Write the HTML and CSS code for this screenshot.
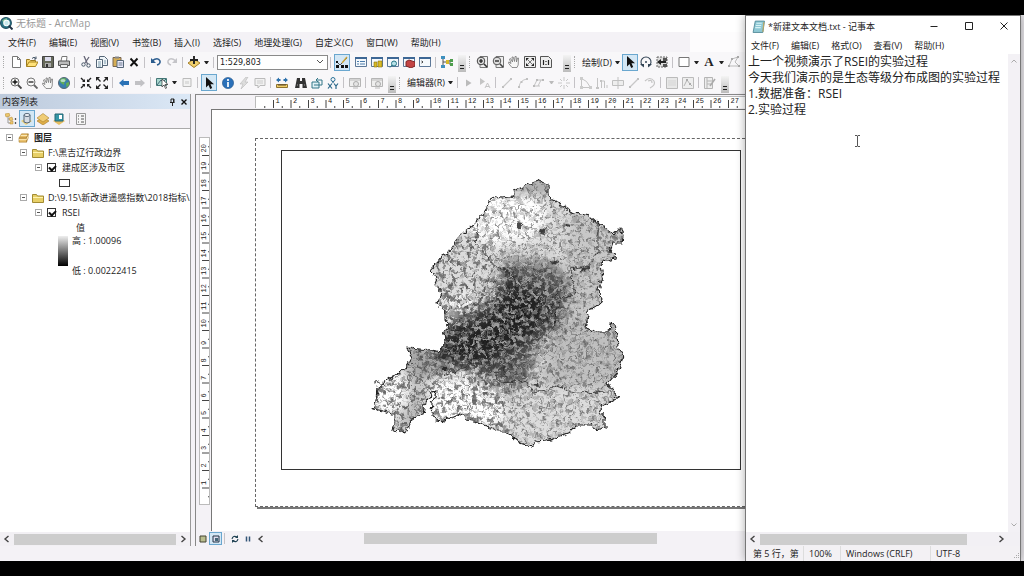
FILE: index.html
```html
<!DOCTYPE html>
<html lang="zh-CN">
<head>
  <meta charset="UTF-8">
  <title>无标题 - ArcMap</title>
  <link rel="stylesheet" href="styles.css">
</head>
<body>

<!-- icon set -->
<svg class="defs" aria-hidden="true">
  <symbol id="new" viewBox="0 0 12 12"><path d="M2.500 .5h5l3 3v8h-8zM7.500 .5v3h3" fill="#fff" stroke="#777"/></symbol>
  <symbol id="open" viewBox="0 0 12 12"><path d="M.5 10.500v-7h3l1 1h5v2" fill="#f6d46a" stroke="#9a7a20"/><path d="M.5 10.500l2.500-4.500h9l-2.500 4.500z" fill="#ffe27a" stroke="#a98420"/><path d="M6 2.500q2-2.500 4 0M10 .5v2.500h-2" fill="none" stroke="#456"/></symbol>
  <symbol id="save" viewBox="0 0 12 12"><path d="M.5 .5h11v11h-11z" fill="#66695a" stroke="#444"/><path d="M3 1h6v4H3z" fill="#dde"/><path d="M3 7h6v4H3z" fill="#aaa"/><path d="M4 8h2v3H4z" fill="#333"/></symbol>
  <symbol id="print" viewBox="0 0 12 12"><path d="M3 5l1-4.500h5L8.500 5" fill="#fff" stroke="#777"/><path d="M.5 5h11v4.500H.5z" fill="#bbb" stroke="#555"/><path d="M2.500 8.500h7v3h-7z" fill="#eee" stroke="#666"/></symbol>
  <symbol id="cut" viewBox="0 0 12 12"><path d="M4 0l3.500 8M9 1L5 7" stroke="#667" stroke-width="1.300"/><circle cx="3.500" cy="8.500" r="1.700" fill="none" stroke="#456"/><circle cx="8.500" cy="9.500" r="1.700" fill="none" stroke="#456"/></symbol>
  <symbol id="copy" viewBox="0 0 12 12"><path d="M3.500 .5h5l3 3v6h-8z" fill="#eef4f8" stroke="#567"/><path d="M.5 3.500h6v8h-6z" fill="#f5fafc" stroke="#567"/><path d="M2 6h3M2 8h3M2 10h3M8 5h2M8 7h2" stroke="#7898aa"/></symbol>
  <symbol id="paste" viewBox="0 0 12 12"><path d="M1 1.500h8v9H1z" fill="#d5ad55" stroke="#765"/><path d="M3 .5h4v2H3z" fill="#888"/><path d="M5 4.500h6.500v7H5z" fill="#eef" stroke="#567"/><path d="M6.500 7h4M6.500 9h4" stroke="#678"/></symbol>
  <symbol id="delete" viewBox="0 0 12 12"><path d="M2.500 2.500l7 7.500M9.500 2.500l-7 7.500" stroke="#111" stroke-width="1.900"/></symbol>
  <symbol id="undo" viewBox="0 0 12 12"><path d="M2 5q6-4.500 8 0q.5 3-3 4" fill="none" stroke="#2b5c8e" stroke-width="1.600"/><path d="M1 2v5h5z" fill="#2b5c8e"/></symbol>
  <symbol id="redo" viewBox="0 0 12 12"><path d="M10 5q-6-4.500-8 0q-.5 3 3 4" fill="none" stroke="#c4c4c8" stroke-width="1.500"/><path d="M11 2v5H6z" fill="#c4c4c8"/></symbol>
  <symbol id="adddata" viewBox="0 0 12 12"><path d="M0 7l6-4 6 4-6 4.500z" fill="#f0cf6c" stroke="#a47e28"/><path d="M6 0v8M2 4h8" stroke="#222" stroke-width="1.900"/></symbol>
  <symbol id="sketch" viewBox="0 0 12 12"><path d="M1 6l3 3 7-7" fill="none" stroke="#555"/><path d="M0 9h3v3H0zM5 9h3v3H5zM9 9h3v3H9zM0 5h2v2H0z" fill="#111"/><path d="M6 7l5-6" stroke="#c7a43c" stroke-width="1.400"/></symbol>
  <symbol id="win" viewBox="0 0 12 12"><path d="M.5 1.500h11v9H.5z" fill="#f5f9fc" stroke="#5d7898"/><path d="M0 1h12v2H0z" fill="#3d6795"/></symbol>
  <symbol id="table" viewBox="0 0 12 12"><use href="#win"/><path d="M2 5.500h2M5 5.500h5M2 8h2M5 8h5" stroke="#4d7dac"/></symbol>
  <symbol id="catalog" viewBox="0 0 12 12"><use href="#win"/><path d="M3 6h3v5H3zM7 5h4v6H7z" fill="#d9ba24" stroke="#887413" stroke-width=".6"/></symbol>
  <symbol id="search" viewBox="0 0 12 12"><use href="#win"/><circle cx="7" cy="7.500" r="2.500" fill="#b8e1e8" stroke="#287787"/><path d="M5 9l-2 2.500" stroke="#287787"/></symbol>
  <symbol id="toolbox" viewBox="0 0 12 12"><use href="#win"/><path d="M3 5.500l3-1.500 6 2v4l-4 2-5-2z" fill="#c34444" stroke="#802929"/></symbol>
  <symbol id="python" viewBox="0 0 12 12"><use href="#win"/><path d="M2.500 5l1.500 1-1.500 1" fill="none" stroke="#333"/></symbol>
  <symbol id="model" viewBox="0 0 12 12"><path d="M2 2v8M2 6h8M6 6l4-2M6 6l4 3" stroke="#555" fill="none"/><path d="M0 0h4v3H0zM0 9h4v3H0z" fill="#3e90bf"/><path d="M5 4h3v4H5z" fill="#d3b82a"/><path d="M9 3h3v3H9zM9 7h3v3H9z" fill="#4d9d4d"/></symbol>
  <symbol id="pagezin" viewBox="0 0 12 12"><path d="M4 .5h7.500v11H4z" fill="#eee" stroke="#777"/><circle cx="5" cy="5" r="3.800" fill="#ddd" stroke="#444"/><path d="M8 8l3 3" stroke="#333" stroke-width="1.600"/><path d="M5 3v4M3 5h4" stroke="#111" stroke-width="1.200"/></symbol>
  <symbol id="pagezout" viewBox="0 0 12 12"><path d="M4 .5h7.500v11H4z" fill="#eee" stroke="#777"/><circle cx="5" cy="5" r="3.800" fill="#ddd" stroke="#555"/><path d="M8 8l3 3" stroke="#444" stroke-width="1.600"/><path d="M3 5h4" stroke="#111" stroke-width="1.200"/></symbol>
  <symbol id="pan" viewBox="0 0 12 12"><path d="M4 11.500L.7 7.500V6l2.300 1.500L1.500 3l1-.5L4.500 6 4 1h1.200L6.500 5.500 7 .5h1.200L8.500 6l1-4h1l-.3 7-1.200 2.500z" fill="#f6f6f6" stroke="#777" stroke-width=".8"/></symbol>
  <symbol id="pagefull" viewBox="0 0 12 12"><path d="M.5 .5h11v11H.5z" fill="#eee" stroke="#555"/><path d="M2 5V2h3zM7 2h3v3zM2 7v3h3zM10 7v3H7z" fill="#222"/><path d="M3 3l6 6M9 3L3 9" stroke="#777"/></symbol>
  <symbol id="one" viewBox="0 0 12 12"><path d="M.5 .5h8l3 3v8H.5z" fill="#eee" stroke="#555"/><path d="M3.500 4v5M8.500 4v5M6 5v1M6 8v1" stroke="#222" stroke-width="1.200"/></symbol>
  <symbol id="pointer" viewBox="0 0 12 12"><path d="M3 0v10.500l2.500-2.500 1.700 4 2-.9-1.700-3.800H11z" fill="#111"/></symbol>
  <symbol id="rotate" viewBox="0 0 12 12"><path d="M3 10A5 5 0 1 1 9 10" fill="none" stroke="#345" stroke-width="1.100"/><path d="M0 8h4v3.500zM12 8H8v3.500z" fill="#345"/><circle cx="6" cy="6" r="1" fill="#345"/></symbol>
  <symbol id="zoomsel" viewBox="0 0 12 12"><path d="M1 1h10v10H1z" fill="#ddd" stroke="#666" stroke-dasharray="2 1"/><path d="M1 6l4-3v2h5v2H5v2z" fill="#222"/><path d="M7 2h4v3H7zM7 8h4v3H7z" fill="#555"/></symbol>
  <symbol id="rect" viewBox="0 0 12 12"><path d="M1 1.500h10v9H1z" fill="#fff" stroke="#777"/></symbol>
  <symbol id="nodes" viewBox="0 0 12 12"><path d="M1 10l3-7 6-2-3 5 4 4z" fill="none" stroke="#bbb"/><path d="M0 9h2v2H0zM3 2h2v2H3zM9 0h2v2H9zM10 9h2v2h-2z" fill="#aaa"/></symbol>
  <symbol id="zin" viewBox="0 0 12 12"><circle cx="5" cy="5" r="4" fill="#f8f8f8" stroke="#666"/><path d="M8 8l3.500 3.500" stroke="#444" stroke-width="1.900"/><path d="M5 2.500v5M2.500 5h5" stroke="#111" stroke-width="1.400"/></symbol>
  <symbol id="zout" viewBox="0 0 12 12"><circle cx="5" cy="5" r="4" fill="#f8f8f8" stroke="#777"/><path d="M8 8l3.500 3.500" stroke="#666" stroke-width="1.900"/><path d="M2.500 5h5" stroke="#222" stroke-width="1.300"/></symbol>
  <symbol id="globe" viewBox="0 0 12 12"><circle cx="6" cy="6" r="5.500" fill="#397fae" stroke="#567"/><path d="M3 1.500l4-.5 1.500 2-2 2-.5 3-3-2-1.500-2zM8 6l3-1v3l-2.500 2.500z" fill="#62ad57"/><ellipse cx="5" cy="3.500" rx="2.500" ry="1.500" fill="#d9eef2" opacity=".7"/></symbol>
  <symbol id="shrink" viewBox="0 0 12 12"><path d="M1 1l3 3M11 1L8 4M1 11l3-3M11 11L8 8" stroke="#222" stroke-width="1.400"/><path d="M5 2v3H2zM7 2v3h3zM5 10V7H2zM7 10V7h3z" fill="#222"/></symbol>
  <symbol id="grow" viewBox="0 0 12 12"><path d="M1.500 1.500l3 3M10.500 1.500l-3 3M1.500 10.500l3-3M10.500 10.500l-3-3" stroke="#222" stroke-width="1.300"/><path d="M0 0h4L0 4zM12 0H8l4 4zM0 12h4L0 8zM12 12H8l4-4z" fill="#222"/></symbol>
  <symbol id="back" viewBox="0 0 12 12"><path d="M1 6l4.500-4V4H11v4H5.500v2z" fill="#2971b5"/></symbol>
  <symbol id="fwd" viewBox="0 0 12 12"><path d="M11 6L6.500 2V4H1v4h5.500v2z" fill="#c1c1c4"/></symbol>
  <symbol id="selfeat" viewBox="0 0 12 12"><path d="M.5 1.500h10v7H.5z" fill="#a9d8cf" stroke="#477"/><path d="M1 8l4-5 2 2 3-3" fill="none" stroke="#467"/><path d="M6 2v8l2-2 1.500 3.500 1.200-.6L9 7.500h3z" fill="#fff" stroke="#333" stroke-width=".7"/></symbol>
  <symbol id="clear" viewBox="0 0 12 12"><path d="M2 1.500h8v8H2z" fill="#f2f2f2" stroke="#bbb"/><path d="M4 4h4v3H4z" fill="#ddd"/></symbol>
  <symbol id="info" viewBox="0 0 12 12"><circle cx="6" cy="6" r="5.600" fill="#2a70b9" stroke="#255587" stroke-width=".6"/><path d="M6 2v2M6 5v5" stroke="#fff" stroke-width="1.700"/></symbol>
  <symbol id="bolt" viewBox="0 0 12 12"><path d="M8 0L2 7h3l-2 5 7-7H7l3-5z" fill="#ddd" stroke="#b8b8b8" stroke-width=".6"/></symbol>
  <symbol id="bubble" viewBox="0 0 12 12"><path d="M1 1.500h10v7H6l-2 2.500v-2.500H1z" fill="#f1f1f1" stroke="#bbb"/><path d="M3 4h6M3 6h6" stroke="#ccc"/></symbol>
  <symbol id="measure" viewBox="0 0 12 12"><path d="M0 3l3-2.500V2h1.500v2H3v1.500zM12 3L9 .5V2H7.500v2H9v1.500z" fill="#2c71ac"/><path d="M.5 7.500h11v3H.5z" fill="#f0ce67" stroke="#8e7431"/><path d="M3 7v2M5 7v2M7 7v2M9 7v2" stroke="#543"/></symbol>
  <symbol id="find" viewBox="0 0 12 12"><path d="M2 1h3v3h2V1h3l2 10H7.500V7h-3v4H0z" fill="#333"/><path d="M2 8h1M9 8h1" stroke="#999"/></symbol>
  <symbol id="route" viewBox="0 0 12 12"><path d="M1 5h7v6H1z" fill="#dff0f5" stroke="#378"/><path d="M3 8h8V3H5M7 1L5 3l2 2" fill="none" stroke="#378"/></symbol>
  <symbol id="xy" viewBox="0 0 12 12"><circle cx="6" cy="2.500" r="2" fill="none" stroke="#2b7298"/><path d="M6 4v2M1 6.500l4 5M5 6.500l-4 5M7 6.500l2 2.500 2-2.500M9 9v3" fill="none" stroke="#286688" stroke-width="1.200"/></symbol>
  <symbol id="viewer" viewBox="0 0 12 12"><path d="M.5 1.500h11v8H.5z" fill="#eee" stroke="#b5b5b5"/><path d="M1 3h10" stroke="#bbb"/><circle cx="7" cy="7" r="2.500" fill="#e5e5e5" stroke="#aaa"/><path d="M4 11h5" stroke="#bbb"/></symbol>
  <symbol id="play" viewBox="0 0 12 12"><path d="M3 2.500v7L8.500 6z" fill="#bbb"/></symbol>
  <symbol id="playa" viewBox="0 0 12 12"><path d="M1 1v7l5-3.500z" fill="#c4c4c4"/><path d="M6 11l2.500-5L11 11M7 9.500h3" stroke="#c4c4c4" fill="none"/></symbol>
  <symbol id="line" viewBox="0 0 12 12"><path d="M2 10L10 2" stroke="#c8c8c8" stroke-width="1.200"/><path d="M1 9h2v2H1zM9 1h2v2H9z" fill="#c0c0c0"/></symbol>
  <symbol id="arc" viewBox="0 0 12 12"><path d="M2 10Q3 3 10 2" fill="none" stroke="#c8c8c8"/><path d="M1 9h2v2H1zM9 1h2v2H9zM3.500 4h2v2h-2z" fill="#c0c0c0"/></symbol>
  <symbol id="trace" viewBox="0 0 12 12"><path d="M1 9l3-6h6M5 9l3-6M1 9h6" fill="none" stroke="#c4c4c4"/><path d="M0 8h2v2H0zM3 2h2v2H3zM9 2h2v2H9z" fill="#bbb"/></symbol>
  <symbol id="burst" viewBox="0 0 12 12"><path d="M6 0v4M6 8v4M0 6h4M8 6h4M2 2l2 2M8 8l2 2M10 2L8 4M4 8l-2 2" stroke="#c8c8c8"/></symbol>
  <symbol id="editv" viewBox="0 0 12 12"><path d="M1.500 1.500v9h9l-4-6z" fill="none" stroke="#c4c4c4"/><path d="M0 0h3v3H0zM0 9h3v3H0zM9 9h3v3H9z" fill="#ccc"/></symbol>
  <symbol id="reshape" viewBox="0 0 12 12"><path d="M1.500 1v10M5.500 11V4h3v7M11 8v3" fill="none" stroke="#c4c4c4"/><path d="M0 10h3v2H0zM4 3h2v2H4z" fill="#c4c4c4"/></symbol>
  <symbol id="cutpoly" viewBox="0 0 12 12"><path d="M.5 3.500h11v5H.5zM6 0v12" fill="#eee" stroke="#c0c0c0"/></symbol>
  <symbol id="turn" viewBox="0 0 12 12"><path d="M1 4q5-5 9 0q2 4-4 7M4 4q4-2 4 2" fill="none" stroke="#c4c4c4" stroke-width="1.200"/></symbol>
  <symbol id="attrs" viewBox="0 0 12 12"><path d="M.5 .5h11v11H.5z" fill="#e8e8e8" stroke="#bbb"/><path d="M2 4h8M2 6h8M2 8h8" stroke="#d5d5d5"/></symbol>
  <symbol id="sketchp" viewBox="0 0 12 12"><path d="M.5 .5h11v11H.5z" fill="#eee" stroke="#bbb"/><path d="M2 9l3-6 3 4 2 2" fill="none" stroke="#b5b5b5"/><path d="M4 2h2v2H4zM7 6h2v2H7z" fill="#aaa"/></symbol>
  <symbol id="template" viewBox="0 0 12 12"><path d="M.5 .5h8v11h-8zM3 .5v11M3 4h5M3 7h4" fill="#eee" stroke="#b5b5b5"/><path d="M6 9l5-7" stroke="#aaa" stroke-width="1.500"/></symbol>
  <symbol id="bydraw" viewBox="0 0 12 12"><path d="M3 3v7h4M3 6h3" fill="none" stroke="#999"/><path d="M0 1l4-1 1 3-4 1zM4 5l3-1 1 3-3 1zM5 9l3-1v3H5z" fill="#ecc66c" stroke="#b48b38" stroke-width=".5"/><path d="M10.500 5v2M10.500 9v2" stroke="#555" stroke-width="1.300"/></symbol>
  <symbol id="bysource" viewBox="0 0 12 12"><path d="M0 8l5-3 6 3-6 4z" fill="#ecd07b"/><path d="M3 2v7q3 2 6 0V2" fill="#d6dce4" stroke="#567"/><ellipse cx="6" cy="2" rx="3" ry="1.500" fill="#f4f7fa" stroke="#567"/></symbol>
  <symbol id="byvis" viewBox="0 0 12 12"><path d="M0 8l6-4 6 4-6 4z" fill="#dfad47" stroke="#a47b27" stroke-width=".6"/><path d="M0 5l6-4.500L12 5 6 9z" fill="#f0cc74" stroke="#a8812e" stroke-width=".6"/></symbol>
  <symbol id="bysel" viewBox="0 0 12 12"><path d="M0 8l6-3 6 3-6 4z" fill="#e6bd60"/><path d="M2 1h8v7H2z" fill="#3596a7" stroke="#256675"/><path d="M6 2h3v4H6z" fill="#fff"/></symbol>
  <symbol id="options" viewBox="0 0 12 12"><path d="M1.500 .5h9v11h-9z" fill="#f5f5f5" stroke="#999"/><path d="M3 3h1M3 6h1M3 9h1M6 3h3M6 6h3M6 9h3" stroke="#555"/></symbol>
  <symbol id="folder" viewBox="0 0 12 10"><path d="M.5 9.500v-8h4l1 1.500h6v6.500z" fill="#e7cf67" stroke="#a28b33"/><path d="M1 4h10v1H1z" fill="#fff3b0"/></symbol>
  <symbol id="layers" viewBox="0 0 12 12"><path d="M0 6l3-5h8L9 6zM0 6h9v5H0zM9 6l2-5v5l-2 5z" fill="#e7bc64" stroke="#ab7f35" stroke-width=".7"/><path d="M0 8h9l2-4M2 3h8" fill="none" stroke="#fff0c5"/></symbol>
  <symbol id="left" viewBox="0 0 8 8"><path d="M5.500 1L2 4l3.500 3" fill="none" stroke="#444" stroke-width="1.400"/></symbol>
  <symbol id="right" viewBox="0 0 8 8"><path d="M2.500 1L6 4 2.500 7" fill="none" stroke="#444" stroke-width="1.400"/></symbol>
</svg>

<main class="desktop">
  <section class="arcmap">
    <header class="titlebar">
      <svg class="logo" viewBox="0 0 12 12"><circle cx="5.500" cy="5.500" r="5" fill="#2c7587" stroke="#1f4d5e"/><path d="M2 3l4-2 1 3-3 3z" fill="#83be95"/><circle cx="6" cy="5.500" r="2.500" fill="#c9e9ed" stroke="#fff"/><path d="M8 8l3.500 3.500" stroke="#234" stroke-width="1.800"/></svg>
      <span>无标题 - ArcMap</span>
    </header>
    <nav class="menubar">
      <button>文件(F)</button><button>编辑(E)</button><button>视图(V)</button><button>书签(B)</button><button>插入(I)</button><button>选择(S)</button><button>地理处理(G)</button><button>自定义(C)</button><button>窗口(W)</button><button>帮助(H)</button>
    </nav>

    <div class="toolrow">
      <div class="toolbar">
        <button aria-label="新建"><svg><use href="#new"/></svg></button>
        <button aria-label="打开"><svg><use href="#open"/></svg></button>
        <button aria-label="保存"><svg><use href="#save"/></svg></button>
        <button aria-label="打印"><svg><use href="#print"/></svg></button>
        <i class="sep"></i>
        <button aria-label="剪切"><svg><use href="#cut"/></svg></button>
        <button aria-label="复制"><svg><use href="#copy"/></svg></button>
        <button aria-label="粘贴"><svg><use href="#paste"/></svg></button>
        <button aria-label="删除"><svg><use href="#delete"/></svg></button>
        <i class="sep"></i>
        <button aria-label="撤消"><svg><use href="#undo"/></svg></button>
        <button aria-label="恢复"><svg><use href="#redo"/></svg></button>
        <i class="sep"></i>
        <button aria-label="添加数据"><svg><use href="#adddata"/></svg></button>
        <i class="caret"></i>
        <i class="sep"></i>
        <select class="scale" aria-label="比例尺"><option>1:529,803</option></select>
        <i class="sep"></i>
        <button class="on" aria-label="编辑器工具条"><svg><use href="#sketch"/></svg></button>
        <button class="first" aria-label="内容列表"><svg><use href="#table"/></svg></button>
        <button aria-label="目录"><svg><use href="#catalog"/></svg></button>
        <button aria-label="搜索"><svg><use href="#search"/></svg></button>
        <button aria-label="工具箱"><svg><use href="#toolbox"/></svg></button>
        <button aria-label="Python"><svg><use href="#python"/></svg></button>
        <i class="sep"></i>
        <button aria-label="模型构建器"><svg><use href="#model"/></svg></button>
        <i class="more"></i>
      </div>
      <div class="toolbar">
        <button aria-label="放大页面"><svg><use href="#pagezin"/></svg></button>
        <button aria-label="缩小页面"><svg><use href="#pagezout"/></svg></button>
        <button aria-label="平移页面"><svg><use href="#pan"/></svg></button>
        <button aria-label="缩放整个页面"><svg><use href="#pagefull"/></svg></button>
        <button aria-label="缩放至 100%"><svg><use href="#one"/></svg></button>
        <i class="sep blank"></i>
        <i class="more"></i>
      </div>
      <div class="toolbar">
        <button class="text">绘制(D)</button><i class="caret"></i>
        <button class="on" aria-label="选择元素"><svg><use href="#pointer"/></svg></button>
        <button aria-label="旋转"><svg><use href="#rotate"/></svg></button>
        <button aria-label="缩放至所选元素"><svg><use href="#zoomsel"/></svg></button>
        <i class="sep"></i>
        <button aria-label="矩形"><svg><use href="#rect"/></svg></button><i class="caret"></i>
        <button class="letter">A</button><i class="caret"></i>
        <button aria-label="编辑折点"><svg><use href="#nodes"/></svg></button>
      </div>
    </div>

    <div class="toolrow">
      <div class="toolbar">
        <button aria-label="放大"><svg><use href="#zin"/></svg></button>
        <button aria-label="缩小"><svg><use href="#zout"/></svg></button>
        <button aria-label="平移"><svg><use href="#pan"/></svg></button>
        <button aria-label="全图"><svg><use href="#globe"/></svg></button>
        <i class="sep"></i>
        <button aria-label="固定比例放大"><svg><use href="#shrink"/></svg></button>
        <button aria-label="固定比例缩小"><svg><use href="#grow"/></svg></button>
        <i class="sep"></i>
        <button aria-label="上一视图"><svg><use href="#back"/></svg></button>
        <button aria-label="下一视图"><svg><use href="#fwd"/></svg></button>
        <i class="sep"></i>
        <button aria-label="选择要素"><svg><use href="#selfeat"/></svg></button><i class="caret"></i>
        <button aria-label="清除所选要素"><svg><use href="#clear"/></svg></button>
        <i class="sep"></i>
        <button class="on" aria-label="选择元素"><svg><use href="#pointer"/></svg></button>
        <button class="first" aria-label="识别"><svg><use href="#info"/></svg></button>
        <button aria-label="超链接"><svg><use href="#bolt"/></svg></button>
        <button aria-label="HTML 弹出窗口"><svg><use href="#bubble"/></svg></button>
        <i class="sep"></i>
        <button aria-label="测量"><svg><use href="#measure"/></svg></button>
        <button class="first" aria-label="查找"><svg><use href="#find"/></svg></button>
        <button aria-label="查找路径"><svg><use href="#route"/></svg></button>
        <button aria-label="转到 XY"><svg><use href="#xy"/></svg></button>
        <i class="sep"></i>
        <button aria-label="时间滑块"><svg><use href="#viewer"/></svg></button>
        <i class="sep"></i>
        <button aria-label="创建查看器窗口"><svg><use href="#viewer"/></svg></button>
        <i class="more"></i>
      </div>
      <div class="toolbar">
        <button class="text">编辑器(R)</button><i class="caret"></i>
        <i class="sep"></i>
        <button aria-label="编辑工具"><svg><use href="#play"/></svg></button>
        <button aria-label="编辑注记"><svg><use href="#playa"/></svg></button>
        <i class="sep"></i>
        <button aria-label="直线段"><svg><use href="#line"/></svg></button>
        <button aria-label="弧线段"><svg><use href="#arc"/></svg></button>
        <button aria-label="追踪"><svg><use href="#trace"/></svg></button><i class="caret off"></i>
        <button aria-label="点"><svg><use href="#burst"/></svg></button>
        <i class="sep"></i>
        <button aria-label="编辑折点"><svg><use href="#editv"/></svg></button>
        <button aria-label="整形要素"><svg><use href="#reshape"/></svg></button>
        <button aria-label="裁剪面"><svg><use href="#cutpoly"/></svg></button>
        <button aria-label="分割"><svg><use href="#line"/></svg></button>
        <button aria-label="旋转工具"><svg><use href="#turn"/></svg></button>
        <i class="sep"></i>
        <button aria-label="属性"><svg><use href="#attrs"/></svg></button>
        <button aria-label="草图属性"><svg><use href="#sketchp"/></svg></button>
        <i class="sep"></i>
        <button aria-label="创建要素"><svg><use href="#template"/></svg></button>
        <i class="more"></i>
      </div>
    </div>

    <div class="work">
      <aside class="toc">
        <header>
          <span>内容列表</span>
          <button aria-label="自动隐藏"><svg viewBox="0 0 8 8"><path d="M2 4.500h4.500M3 4.500V1h3v3.500M4.500 5v3" fill="none" stroke="#222"/><path d="M5 1h1v3H5z" fill="#222"/></svg></button>
          <button aria-label="关闭"><svg viewBox="0 0 8 8"><path d="M1.500 1.500l5 5M6.500 1.500l-5 5" stroke="#111" stroke-width="1.400"/></svg></button>
        </header>
        <div class="toc-tools">
          <button aria-label="按绘制顺序列出"><svg><use href="#bydraw"/></svg></button>
          <button class="on" aria-label="按源列出"><svg><use href="#bysource"/></svg></button>
          <button aria-label="按可见性列出"><svg><use href="#byvis"/></svg></button>
          <button aria-label="按选择列出"><svg><use href="#bysel"/></svg></button>
          <i class="sep"></i>
          <button aria-label="选项"><svg><use href="#options"/></svg></button>
        </div>
        <div class="tree">
          <div class="node"><i class="minus"></i><svg><use href="#layers"/></svg><b>图层</b></div>
          <div class="node l1"><i class="minus"></i><svg><use href="#folder"/></svg>F:\黑吉辽行政边界</div>
          <div class="node l2"><i class="minus"></i><input type="checkbox" id="lyr1" checked><label for="lyr1">建成区涉及市区</label></div>
          <div class="node sym"><i class="swatch"></i></div>
          <div class="node l1"><i class="minus"></i><svg><use href="#folder"/></svg>D:\9.15\新改进遥感指数\2018指标\</div>
          <div class="node l2"><i class="minus"></i><input type="checkbox" id="lyr2" checked><label for="lyr2">RSEI</label></div>
          <div class="node val">值</div>
          <div class="legend"><i class="ramp"></i><div><span>高 : 1.00096</span><span>低 : 0.00222415</span></div></div>
        </div>
        <div class="hscroll"><svg><use href="#left"/></svg><i class="thumb"></i><svg><use href="#right"/></svg></div>
      </aside>

      <div class="layout">
        <svg class="ruler-h" id="rulerH"></svg>
        <svg class="ruler-v" id="rulerV"></svg>
        <div class="view">
          <div class="sheet">
            <div class="frame">
              <svg class="map" viewBox="362 170 272 288">
                <defs>
                  <path id="outline" d="M510 197L502 198 493 196 488 203 485 212 475 223 463 233 455 243 448 253 442 256 437 262 432 267 433 275 438 278 435 285 442 293 437 303 445 312 445 320 448 325 444 333 445 342 440 352 432 350 408 348 412 358 407 367 388 380 378 388 377 400 373 409 385 411 394 415 394 427 393 431 400 430 405 433 410 425 413 417 423 415 425 403 432 393 436 392 432 403 431 413 437 420 443 421 447 417 455 418 462 413 467 420 478 422 487 428 498 431 505 431 513 437 520 443 532 447 535 442 547 441 557 437 570 432 577 425 590 425 597 430 605 427 605 418 600 412 603 406 618 397 612 390 608 383 618 372 623 357 618 347 617 335 615 325 610 324 609 332 597 332 585 328 588 317 587 310 598 307 603 298 598 290 603 278 601 263 615 259 616 253 609 252 612 243 622 243 623 235 619 228 614 235 607 230 598 223 590 216 575 213 562 205 548 197 548 184 540 180 527 185 513 190 514 195z"/>
                  <clipPath id="land"><use href="#outline"/></clipPath>
                  <filter id="soft" x="-20%" y="-20%" width="140%" height="140%"><feGaussianBlur stdDeviation="5"/></filter>
                  <filter id="haze" x="-20%" y="-20%" width="140%" height="140%"><feGaussianBlur stdDeviation="8"/></filter>
                  <!-- speckle of the raster cells, fine to coarse -->
                  <filter id="grain" x="0" y="0" width="100%" height="100%" color-interpolation-filters="sRGB"><feTurbulence type="fractalNoise" baseFrequency=".3" numOctaves="3" seed="12"/><feColorMatrix values="0 0 0 0 .25  0 0 0 0 .25  0 0 0 0 .25  5 0 0 0 -2.600"/></filter>
                  <filter id="spots" x="0" y="0" width="100%" height="100%" color-interpolation-filters="sRGB"><feTurbulence type="fractalNoise" baseFrequency=".18" numOctaves="4" seed="31"/><feColorMatrix values="0 0 0 0 .3  0 0 0 0 .3  0 0 0 0 .3  0 6 0 0 -3.100"/></filter>
                  <filter id="dense" x="0" y="0" width="100%" height="100%" color-interpolation-filters="sRGB"><feTurbulence type="fractalNoise" baseFrequency=".22" numOctaves="4" seed="7"/><feColorMatrix values="0 0 0 0 .12  0 0 0 0 .12  0 0 0 0 .12  5 0 0 0 -1.900"/></filter>
                  <filter id="rough" x="-5%" y="-5%" width="110%" height="110%"><feTurbulence type="fractalNoise" baseFrequency=".2" numOctaves="2" seed="3"/><feDisplacementMap in="SourceGraphic" scale="7" xChannelSelector="R" yChannelSelector="G"/></filter>
                  <mask id="city" maskUnits="userSpaceOnUse" x="362" y="170" width="272" height="288">
                    <g filter="url(#haze)" fill="#fff">
                      <path d="M502 262l50 2 18 25-6 35-25 25-12 35-35 10-25-22-40-10-4-30 25-22 35-10 14-20z" opacity=".6"/>
                      <path d="M510 285l32 6 8 25-25 24-30 20-48 5-10-25 45-18z"/>
                    </g>
                  </mask>
                  <mask id="spotted" maskUnits="userSpaceOnUse" x="362" y="170" width="272" height="288">
                    <g filter="url(#soft)" fill="#fff">
                      <path d="M362 340h90l70 70-30 30h-130zM425 235l60 0 30 40-50 70-40-10z"/>
                      <path d="M480 180h150v280H480z" opacity=".4"/>
                    </g>
                  </mask>
                </defs>
                <g filter="url(#rough)">
                  <g clip-path="url(#land)">
                    <path d="M362 170h272v288H362z" fill="#dcdcdc"/>
                    <g filter="url(#soft)">
                      <path d="M485 192l50 0 15 25-15 20-40 10-30-15z" fill="#fff"/>
                      <path d="M435 380l60-10 10 50-30 10-50-10z" fill="#fff"/>
                      <path d="M370 385l30-15 10 30-30 20z" fill="#fff"/>
                      <path d="M440 305l30-15 10 20-35 15z" fill="#fff"/>
                      <path d="M570 210l60 10-10 50-25 60-45-10 15-40z" fill="#c8c8c8"/>
                      <path d="M555 325l75-10v75l-90-5z" fill="#c0c0c0"/>
                      <path d="M405 345l40-5 10 30-45 15z" fill="#aaa"/>
                      <path d="M412 390l14-5-5 35-25 15z" fill="#bbb"/>
                      <path d="M510 180h40v15h-40z" fill="#aaa"/>
                      <path d="M505 262l50 0 12 20-6 40-25 25-10 35-30 5-25-20-35-8 2-28 28-20 30-12z" fill="#777" opacity=".6"/>
                    </g>
                    <path d="M362 170h272v288H362z" filter="url(#grain)" opacity=".55"/>
                    <g mask="url(#spotted)"><path d="M362 170h272v288H362z" filter="url(#spots)" opacity=".7"/></g>
                    <g mask="url(#city)"><path d="M362 170h272v288H362z" filter="url(#dense)"/></g>
                    <g fill="#222" opacity=".8"><path d="M552 260l6 2-1 3-6-2zM532 386l7-6-2 7zM540 228l7 1-2 6-6-2zM580 269l10-3v3l-10 2zM517 223l6 1-1 4-6-1zM565 224l6 1-1 3-5-1zM443 367l3-1v4h-3z"/></g>
                  </g>
                  <use href="#outline" fill="none" stroke="#222" stroke-width="1.100"/>
                  <path d="M478 223l-3 20 12 14 8 10 12 3 4 8-3 18 5 12M598 223v28l-10 15-17 4 4 24-14 4-5-4-6 5 6 18-4 14M445 333l20-4 18-10 5 2v12h10M444 375l12-4 16-8 10-18 20-2 12-14 30-6 16-20M480 335l8 20 14 8 3 12M500 381l25 1 8 11 14-2 12-5 12 7 40-1M512 270l8 30-5 22 18 12" fill="none" stroke="#222" stroke-width=".8"/>
                  <path d="M374 383l5-1 6 4" fill="none" stroke="#444"/>
                </g>
              </svg>
            </div>
          </div>
        </div>
        <div class="viewbar">
          <button aria-label="数据视图"><svg viewBox="0 0 8 8"><path d="M1 1h6v6H1z" fill="#b9bd8d" stroke="#443"/></svg></button>
          <button class="on" aria-label="布局视图"><svg viewBox="0 0 8 8"><path d="M1 1h6v6H1z" fill="#dde" stroke="#234"/><path d="M3 3h3v3H3z" fill="#467"/></svg></button>
          <i class="sep"></i>
          <button aria-label="刷新"><svg viewBox="0 0 8 8"><path d="M1 4q1-4 5-2M7 4q-1 4-5 2" fill="none" stroke="#245" stroke-width="1.100"/><path d="M7 0v3H4zM1 8V5h3z" fill="#245"/></svg></button>
          <button aria-label="暂停"><svg viewBox="0 0 8 8"><path d="M2.500 1.500v5M5.500 1.500v5" stroke="#357" stroke-width="1.500"/></svg></button>
          <button aria-label="向左滚动"><svg viewBox="0 0 8 8"><use href="#left"/></svg></button>
          <div class="track"><i class="thumb"></i></div>
        </div>
      </div>
    </div>
    <footer class="statusbar"></footer>
  </section>

  <section class="notepad">
    <header class="titlebar">
      <svg class="logo" viewBox="0 0 12 12"><path d="M3 1h8.500L10 11.500H1z" fill="#8fc8d4" stroke="#4e8794" stroke-width=".8"/><path d="M4 3h5M3.500 5h5M3 7h5" stroke="#d7f2f5"/><path d="M11 2l-1 9" stroke="#bba660"/></svg>
      <span>*新建文本文档.txt - 记事本</span>
      <button aria-label="最小化"><svg viewBox="0 0 10 10"><path d="M1.500 5.500h7" stroke="#222"/></svg></button>
      <button aria-label="最大化"><svg viewBox="0 0 10 10"><path d="M1.500 1.500h7v7h-7z" fill="none" stroke="#222"/></svg></button>
      <button aria-label="关闭记事本"><svg viewBox="0 0 10 10"><path d="M1.500 1.500l7 7M8.500 1.500l-7 7" stroke="#222"/></svg></button>
    </header>
    <nav class="menubar">
      <button>文件(F)</button><button>编辑(E)</button><button>格式(O)</button><button>查看(V)</button><button>帮助(H)</button>
    </nav>
    <div class="editor">
      <textarea aria-label="文本" spellcheck="false">上一个视频演示了RSEI的实验过程
今天我们演示的是生态等级分布成图的实验过程
1.数据准备：RSEI
2.实验过程</textarea>
      <div class="vscroll"><svg viewBox="0 0 8 8"><path d="M1.500 5.500L4 3l2.500 2.500" fill="none" stroke="#aaa"/></svg><svg viewBox="0 0 8 8"><path d="M1.500 2.500L4 5l2.500-2.500" fill="none" stroke="#aaa"/></svg></div>
      <svg class="ibeam" viewBox="0 0 7 12"><path d="M1 .5h2l.5.5.5-.5h2M3.500 1v10M1 11.500h2l.5-.5.5.5h2" fill="none" stroke="#555"/></svg>
    </div>
    <div class="hscroll"><svg><use href="#left"/></svg><i class="thumb"></i><svg><use href="#right"/></svg></div>
    <footer class="statusbar"><span>第 5 行，第</span><span>100%</span><span>Windows (CRLF)</span><span>UTF-8</span><svg class="grip" viewBox="0 0 8 8"><path d="M6 1h1v1H6zM6 3h1v1H6zM4 3h1v1H4zM6 5h1v1H6zM4 5h1v1H4zM2 5h1v1H2z" fill="#aaa"/></svg></footer>
  </section>
</main>

<script>
const CM = 17.5;

function line(x1, y1, x2, y2) {
  return `<path d="M${x1} ${y1}L${x2} ${y2}"/>`;
}

function drawRulers() {
  let h = "";
  for (let i = 0; i <= 27; i++) {
    const x = i * CM;
    if (i > 0) {
      h += line(x, 3, x, 11) + `<text x="${x + 2}" y="6">${i}</text>`;
    }
    h += line(x + CM / 2, 9, x + CM / 2, 11);
  }
  document.getElementById("rulerH").innerHTML = h;

  let v = "";
  for (let i = 0; i <= 20; i++) {
    const y = (21 - i) * CM;
    if (i > 0) {
      v += line(2, y, 10, y) + `<text transform="translate(6 ${y - 3}) rotate(-90)">${i}</text>`;
    }
    v += line(8, y - CM / 2, 10, y - CM / 2);
  }
  document.getElementById("rulerV").innerHTML = v;
}

drawRulers();
</script>

</body>
</html>
```
FILE: styles.css
```css
* {
  box-sizing: border-box;
}
body {
  margin: 0;
  height: 100vh;
  padding: 15px 0;
  background: #000;
  color: #222;
  font: 9px/15px "Open Sans", "Noto Sans CJK SC", sans-serif;
  overflow: hidden;
}
button {
  display: flex;
  align-items: center;
  justify-content: center;
  padding: 0;
  border: 1px solid transparent;
  background: none;
  color: inherit;
  font: inherit;
  white-space: nowrap;
}
.defs {
  display: none;
}
.desktop {
  display: flex;
  height: 100%;
  padding-right: 3px;
  background: #e6e4e8;
}
.arcmap {
  flex: 1;
  min-width: 0;
  display: flex;
  flex-direction: column;
  background: #f4f2f6;
  overflow: hidden;
}
.titlebar {
  display: flex;
  align-items: center;
  background: #fff;
}
.logo {
  width: 13px;
  height: 13px;
  flex: none;
}
.arcmap .titlebar {
  height: 17px;
  gap: 3px;
  color: #999;
  font-size: 10px;
}
.menubar {
  display: flex;
}
.arcmap .menubar {
  height: 20px;
  padding-left: 7px;
  gap: 11px;
  background: linear-gradient(90deg, #f4f2f6 690px, #fdfcfd 690px);
}

/* toolbars */
.toolrow {
  display: flex;
  height: 20px;
  background: #f8f7f9;
}
.toolrow + .toolrow {
  height: 21px;
}
.toolbar {
  display: flex;
  align-items: center;
  flex: none;
  padding-left: 3px;
}
.toolbar::before {
  content: "";
  width: 2px;
  height: 12px;
  margin-right: 2px;
  border-left: 1px dotted #aaa;
}
.toolbar button,
.toc-tools button {
  width: 16px;
  height: 17px;
  flex: none;
}
.toolbar button.first {
  margin-left: 3px;
}
.toolbar svg,
.toc-tools svg {
  width: 12px;
  height: 12px;
  flex: none;
}
.toolbar button.text {
  width: auto;
  padding-left: 2px;
}
.toolbar button.letter {
  font: bold 13px "Liberation Serif", serif;
}
button.on {
  border-color: #6aa7cf;
  background: #d3e7f5;
}
.sep {
  width: 1px;
  height: 11px;
  margin: 0 3px 0 2px;
  background: #c4c2c6;
  flex: none;
}
.sep.blank {
  background: none;
}
.caret {
  width: 5px;
  margin: 0 2px;
  border: 2px solid transparent;
  border-top: 3px solid #222;
  border-bottom: 0;
  flex: none;
}
.caret.off {
  border-top-color: #bbb;
}
.more {
  width: 8px;
  height: 17px;
  margin-left: 3px;
  align-self: flex-end;
  background: linear-gradient(#f4f4f4, #bbb);
  flex: none;
}
.more::after {
  content: "";
  display: block;
  width: 4px;
  margin: 10px 2px 0;
  border-top: 1px solid #222;
  box-shadow: 0 3px #222;
}
.scale {
  width: 111px;
  height: 15px;
  padding: 0 2px;
  border: 1px solid #8a8a8a;
  border-radius: 0;
  background: #fff url("data:image/svg+xml,%3Csvg xmlns='http://www.w3.org/2000/svg' viewBox='0 0 8 6'%3E%3Cpath d='M1 1l3 3 3-3' fill='none' stroke='%23555'/%3E%3C/svg%3E") no-repeat right 3px center / 8px 6px;
  color: #222;
  font: 8px "DejaVu Sans", sans-serif;
  appearance: none;
  flex: none;
}

/* table of contents */
.work {
  flex: 1;
  min-height: 0;
  display: flex;
  gap: 4px;
  padding-top: 1px;
}
.toc {
  width: 191px;
  display: flex;
  flex-direction: column;
  border-right: 1px solid #999;
  flex: none;
}
.toc header {
  display: flex;
  align-items: center;
  height: 15px;
  padding: 0 0 0 2px;
  background: linear-gradient(90deg, #bdcadc, #dbe8f6);
}
.toc header span {
  flex: 1;
}
.toc header button {
  width: 12px;
}
.toc header svg {
  width: 8px;
  height: 8px;
}
.toc-tools {
  display: flex;
  align-items: center;
  height: 20px;
  padding-left: 3px;
  border-bottom: 1px solid #aaa;
}
.tree {
  flex: 1;
  padding-top: 1px;
  background: #fff;
  overflow: hidden;
}
.node {
  display: flex;
  align-items: center;
  height: 15px;
  padding-left: 6px;
  white-space: nowrap;
}
.node svg {
  width: 12px;
  height: 10px;
  margin: 0 4px 0 5px;
  flex: none;
}
.l1 {
  padding-left: 20px;
}
.l2 {
  padding-left: 35px;
}
.sym {
  padding-left: 59px;
}
.val {
  padding-left: 76px;
}
.minus {
  width: 7px;
  height: 7px;
  border: 1px solid #aaa;
  background: linear-gradient(#555, #555) center / 3px 1px no-repeat;
  flex: none;
}
.node input {
  appearance: none;
  width: 9px;
  height: 9px;
  margin: 0 6px 0 5px;
  border: 1px solid #333;
  background: #fff;
}
.node input:checked::after {
  content: "";
  display: block;
  width: 5px;
  height: 3px;
  margin: 1px;
  border: solid #111;
  border-width: 0 0 2px 2px;
  transform: rotate(-45deg);
}
.swatch {
  width: 11px;
  height: 8px;
  border: 1px solid #333;
}
.legend {
  display: flex;
  gap: 4px;
  height: 41px;
  padding: 1px 0 0 58px;
  line-height: 10px;
}
.legend div {
  display: flex;
  flex-direction: column;
  justify-content: space-between;
}
.ramp {
  width: 10px;
  height: 30px;
  background: linear-gradient(#eee, #000);
}
.hscroll {
  display: flex;
  align-items: center;
  gap: 3px;
  height: 14px;
  padding: 0 3px;
  background: #f2f0f4;
  flex: none;
}
.hscroll svg {
  width: 8px;
  height: 8px;
  flex: none;
}
.thumb {
  flex: 1;
  height: 11px;
  background: #cdcdcd;
}

/* layout view */
.layout {
  flex: 1;
  min-width: 0;
  display: grid;
  grid-template-columns: 15px 1fr;
  grid-template-rows: 14px 1fr 15px;
  border: solid #888;
  border-width: 1px 0 0 1px;
}
.ruler-h,
.ruler-v {
  background: #fff;
  stroke: #444;
  font: 7px "Liberation Mono", monospace;
  overflow: hidden;
}
.ruler-h text,
.ruler-v text {
  stroke: none;
  fill: #222;
}
.ruler-h {
  grid-column: 1 / 3;
  width: calc(100% - 59px);
  height: 12px;
  margin: 1px 0 0 59px;
  border: 1px solid #bbb;
  border-width: 1px 0 0 1px;
}
.ruler-v {
  width: 11px;
  height: 368px;
  margin: 28px 0 0 3px;
  border: 1px solid #bbb;
}
.view {
  min-width: 0;
  border: solid #777;
  border-width: 1px 0 0 1px;
  background: #fff;
  overflow: hidden;
}
.sheet {
  margin: 28px 0 0 43px;
  padding: 11px 4px 36px 25px;
  border: 1px dashed #666;
  border-right: 0;
  box-shadow: 2px 2px #777;
}
.frame {
  border: 1px solid #333;
}
.map {
  display: block;
  width: 272px;
  height: 288px;
  margin: 19px 0 11px 80px;
}
.viewbar {
  grid-column: 1 / 3;
  display: flex;
  align-items: center;
  background: #f4f2f6;
}
.viewbar button {
  width: 13px;
  height: 13px;
}
.viewbar svg {
  width: 8px;
  height: 8px;
}
.track {
  flex: 1;
  display: flex;
  padding: 0 88px 0 97px;
}
.statusbar {
  height: 15px;
  flex: none;
}

/* notepad */
.notepad {
  width: 276px;
  display: flex;
  flex-direction: column;
  border: solid #777;
  border-width: 1px 1px 0;
  background: #fff;
  box-shadow: 0 0 9px #0005;
  flex: none;
}
.notepad .titlebar {
  height: 20px;
  padding-left: 6px;
  gap: 3px;
}
.notepad .titlebar span {
  flex: 1;
}
.notepad .titlebar button {
  width: 32px;
}
.notepad .titlebar button svg {
  width: 10px;
  height: 10px;
}
.notepad .menubar {
  height: 18px;
  padding-left: 4px;
  gap: 10px;
}
.editor {
  flex: 1;
  display: flex;
  position: relative;
  min-height: 0;
}
.editor textarea {
  flex: 1;
  min-width: 0;
  padding: 0 2px;
  border: 0;
  outline: 0;
  background: #fff;
  color: #222;
  font: 12px/16px "Open Sans", "Noto Sans CJK SC", sans-serif;
  resize: none;
  overflow: hidden;
}
.ibeam {
  position: absolute;
  left: 108px;
  top: 81px;
  width: 7px;
  height: 12px;
}
.vscroll {
  display: flex;
  flex-direction: column;
  justify-content: space-between;
  width: 12px;
  padding: 3px 2px;
  background: #f3f1f5;
}
.vscroll svg {
  width: 8px;
  height: 8px;
}
.notepad .hscroll {
  padding-right: 15px;
}
.notepad .thumb {
  margin-right: 27px;
}
.notepad .statusbar {
  display: flex;
  padding-left: 7px;
  background: #f3f1f4;
  white-space: nowrap;
}
.notepad .statusbar span {
  width: 90px;
  padding-left: 5px;
  border-left: 1px solid #ddd;
  overflow: hidden;
  flex: none;
}
.notepad .statusbar span:first-child {
  width: 50px;
  padding-left: 0;
  border: 0;
}
.notepad .statusbar span:nth-child(2) {
  width: 37px;
}
.notepad .statusbar span:nth-child(4) {
  flex: 1;
}
.grip {
  width: 8px;
  height: 8px;
  margin-top: 6px;
}
```
